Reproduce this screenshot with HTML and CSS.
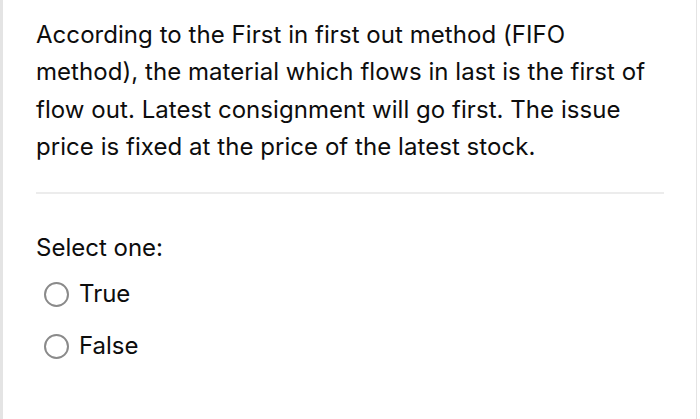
FILE: index.html
```html
<!DOCTYPE html>
<html>
<head>
<meta charset="utf-8">
<link rel="stylesheet" href="styles.css">
</head>
<body>
<div class="card">
  <p class="question">According to the First in first out method (FIFO method), the material which flows in last is the first of flow out. Latest consignment will go first. The issue price is fixed at the price of the latest stock.</p>
  <hr class="divider">
  <div class="prompt">Select one:</div>
  <div class="options">
    <label class="option"><span class="radio"></span><span class="label">True</span></label>
    <label class="option"><span class="radio"></span><span class="label">False</span></label>
  </div>
</div>
</body>
</html>
```
FILE: styles.css
```css
html, body {
  margin: 0;
  padding: 0;
  background: #ffffff;
}
body {
  font-family: "Inter", "Liberation Sans", sans-serif;
  color: #0d0d0d;
  width: 700px;
  height: 419px;
  overflow: hidden;
}
.card {
  box-sizing: border-box;
  width: 697px;
  height: 419px;
  border-left: 3px solid #e4e4e4;
  border-right: 1px solid #e4e4e4;
  padding: 16px 30px 0 33px;
}
.question {
  margin: 0;
  font-size: 24px;
  line-height: 37.3px;
  letter-spacing: 0.05px;
  max-width: 624px;
}
.divider {
  margin: 27px 0 0 0;
  width: 628px;
  border: 0;
  height: 2px;
  background: #ececec;
}
.prompt {
  margin-top: 39px;
  font-size: 24px;
  line-height: 30px;
}
.options {
  display: flex;
  flex-direction: column;
  gap: 22px;
  margin-top: 16px;
  padding-left: 8px;
}
.option {
  display: flex;
  align-items: center;
  gap: 10px;
  font-size: 24px;
  line-height: 30px;
}
.radio {
  box-sizing: border-box;
  width: 25px;
  height: 25px;
  border: 2px solid #8a8a8a;
  border-radius: 50%;
}
```
